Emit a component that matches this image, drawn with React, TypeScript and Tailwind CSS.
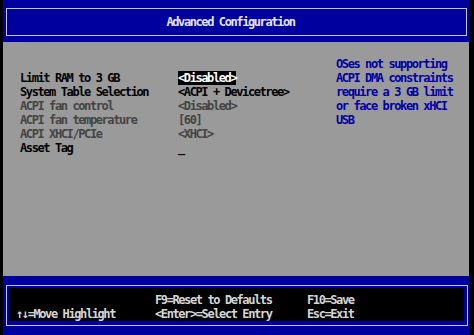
const ITEMS = [
  { label: 'Limit RAM to 3 GB', value: '<Disabled>', on: true, sel: true },
  { label: 'System Table Selection', value: '<ACPI + Devicetree>', on: true },
  { label: 'ACPI fan control', value: '<Disabled>', on: false },
  { label: 'ACPI fan temperature', value: '[60]', on: false },
  { label: 'ACPI XHCI/PCIe', value: '<XHCI>', on: false },
  { label: 'Asset Tag', value: '_', on: true },
]

const HELP = [
  'OSes not supporting',
  'ACPI DMA constraints',
  'require a 3 GB limit',
  'or face broken xHCI',
  'USB',
]

export default function App() {
  return (
    <div
      className="w-[474px] h-[335px] bg-black pl-[3px] pr-[5px] flex flex-col overflow-hidden font-bold text-[12px] leading-[14px] tracking-[-1.4px]"
      style={{ fontFamily: '"DejaVu Sans Mono", "Liberation Mono", monospace' }}
    >
      {/* Title bar */}
      <div className="h-[42px] bg-[#00009e] pt-[8px] pl-[3px] pr-[2px]">
        <div className="h-[28px] border border-[#c4c4ee] flex items-center justify-center pr-[12px] text-[#e4e4ff]">
          Advanced Configuration
        </div>
      </div>

      {/* Body */}
      <div className="h-[234px] bg-[#9a9a9a] flex pt-[15px]">
        <div className="pt-[14px]">
          {ITEMS.map((it) => (
            <div
              key={it.label}
              className={`flex whitespace-pre ${it.on ? 'text-black' : 'text-[#444444]'}`}
            >
              <span className="w-[175px] pl-[17px]">{it.label}</span>
              <span className="w-[141px]">
                {it.sel ? <span className="bg-black text-white">{it.value}</span> : it.value}
              </span>
            </div>
          ))}
        </div>
        <div className="pl-[17px] text-[#0000a4]">
          {HELP.map((l) => (
            <div key={l} className="whitespace-pre">{l}</div>
          ))}
        </div>
      </div>

      {/* Footer */}
      <div className="flex-1 bg-[#00009e] pt-[9px] pl-[3px] pr-[1px]">
        <div className="h-[41px] border border-[#c4c4ee] pt-[2px] pl-[2px] pr-[3px]">
          <div className="h-[33px] bg-black pt-[5px] pl-[7px] text-[#d6d6d6] grid grid-cols-[139px_152px_1fr] whitespace-pre">
            <div className="pt-[14px]">↑↓=Move Highlight</div>
            <div>
              <div>F9=Reset to Defaults</div>
              <div>{'<Enter>=Select Entry'}</div>
            </div>
            <div>
              <div>F10=Save</div>
              <div>Esc=Exit</div>
            </div>
          </div>
        </div>
      </div>
    </div>
  )
}
